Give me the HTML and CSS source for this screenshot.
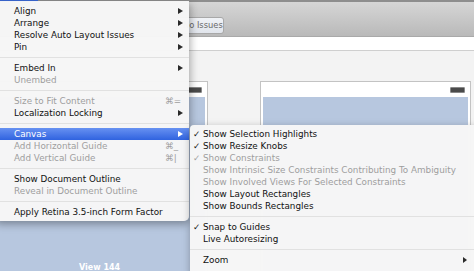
FILE: index.html
```html
<!DOCTYPE html>
<html lang="en">
<head>
    <meta charset="UTF-8">
    <meta name="viewport" content="width=device-width, initial-scale=1.0">
    <title>Editor menu</title>
    <link rel="stylesheet" href="styles.css">
</head>
<body>
    <div class="window">
        <div class="menubar">
            <span class="menubar-title"></span>
        </div>
        <div class="toolbar">
            <button class="issues">No Issues</button>
        </div>
        <div class="jumpbar"></div>
        <div class="canvas">
            <div class="scene scene-left">
                <div class="scene-header"><span class="battery"></span></div>
                <div class="scene-body"><span class="scene-label">View 144</span></div>
            </div>
            <div class="scene scene-right">
                <div class="scene-header"><span class="battery"></span></div>
                <div class="scene-body"></div>
            </div>
        </div>
    </div>

    <ul class="menu main-menu">
        <li class="item">Align<span class="arrow"></span></li>
        <li class="item">Arrange<span class="arrow"></span></li>
        <li class="item">Resolve Auto Layout Issues<span class="arrow"></span></li>
        <li class="item">Pin<span class="arrow"></span></li>
        <li class="separator"></li>
        <li class="item">Embed In<span class="arrow"></span></li>
        <li class="item disabled">Unembed</li>
        <li class="separator"></li>
        <li class="item disabled">Size to Fit Content<span class="shortcut">⌘=</span></li>
        <li class="item">Localization Locking<span class="arrow"></span></li>
        <li class="separator"></li>
        <li class="item selected">Canvas<span class="arrow"></span></li>
        <li class="item disabled">Add Horizontal Guide<span class="shortcut">⌘_</span></li>
        <li class="item disabled">Add Vertical Guide<span class="shortcut">⌘|</span></li>
        <li class="separator"></li>
        <li class="item">Show Document Outline</li>
        <li class="item disabled">Reveal in Document Outline</li>
        <li class="separator"></li>
        <li class="item">Apply Retina 3.5-inch Form Factor</li>
    </ul>

    <ul class="menu sub-menu">
        <li class="item"><span class="check">✓</span>Show Selection Highlights</li>
        <li class="item"><span class="check">✓</span>Show Resize Knobs</li>
        <li class="item disabled"><span class="check">✓</span>Show Constraints</li>
        <li class="item disabled"><span class="check"></span>Show Intrinsic Size Constraints Contributing To Ambiguity</li>
        <li class="item disabled"><span class="check"></span>Show Involved Views For Selected Constraints</li>
        <li class="item"><span class="check"></span>Show Layout Rectangles</li>
        <li class="item"><span class="check"></span>Show Bounds Rectangles</li>
        <li class="separator"></li>
        <li class="item"><span class="check">✓</span>Snap to Guides</li>
        <li class="item"><span class="check"></span>Live Autoresizing</li>
        <li class="separator"></li>
        <li class="item"><span class="check"></span>Zoom<span class="arrow"></span></li>
    </ul>
</body>
</html>
```

FILE: styles.css
```css
body {
    margin: 0;
    width: 474px;
    height: 271px;
    overflow: hidden;
    position: relative;
    font-family: "DejaVu Sans", sans-serif;
    font-size: 8.8px;
    background-color: #f3f3f3;
}
.window {
    display: flex;
    flex-direction: column;
    height: 271px;
}
.menubar {
    height: 2px;
    background-color: #8e8e8e;
}
.menubar-title {
    display: block;
    width: 38px;
    height: 2px;
    background-color: #3b6ad8;
}
.toolbar {
    height: 35px;
    background: linear-gradient(#d6d6d6, #b9b9b9);
    border-bottom: 1px solid #a9a9a9;
    padding-left: 176px;
    box-sizing: border-box;
    display: flex;
    align-items: center;
    padding-top: 12px;
}
.issues {
    font-family: "DejaVu Sans", sans-serif;
    font-size: 8.3px;
    color: #6a6a6a;
    background: linear-gradient(#f0f2f6, #e1e5ec);
    border: 1px solid #a8a8a8;
    border-radius: 3px;
    height: 17px;
    width: 48px;
    padding: 0 0 0 6px;
    text-align: left;
}
.jumpbar {
    height: 13px;
    background-color: #ffffff;
    border-bottom: 1px solid #cfcfcf;
}
.canvas {
    flex: 1;
    position: relative;
    background-color: #f3f3f3;
}
.scene {
    position: absolute;
    top: 30px;
    height: 220px;
    background-color: #ffffff;
    border: 1px solid #c3c3c3;
    padding: 0 2px;
    display: flex;
    flex-direction: column;
}
.scene-left {
    left: -10px;
    width: 212px;
}
.scene-right {
    left: 260px;
    width: 205px;
}
.scene-header {
    height: 15px;
    display: flex;
    align-items: center;
    justify-content: flex-end;
    padding-right: 3px;
}
.battery {
    width: 13px;
    height: 4px;
    background-color: #4a4a4a;
    border: 1px solid #888;
    border-radius: 1px;
}
.scene-body {
    flex: 1;
    background-color: #b7c7df;
    position: relative;
}
.scene-label {
    position: absolute;
    left: 86px;
    top: 166px;
    color: #ffffff;
    font-weight: bold;
    font-size: 8px;
}

.menu {
    position: absolute;
    list-style: none;
    margin: 0;
    background-color: rgba(246, 246, 246, 0.98);
    box-shadow: 1px 3px 8px rgba(0, 0, 0, 0.35);
    color: #111111;
}
.main-menu {
    left: -6px;
    top: 1px;
    width: 195px;
    padding: 4px 0 3px 0;
    border-radius: 0 0 5px 5px;
}
.sub-menu {
    left: 190px;
    top: 125px;
    width: 290px;
    padding: 3px 0 10px 0;
    border-radius: 4px;
}
.item {
    height: 12px;
    line-height: 12px;
    display: flex;
    align-items: center;
    white-space: nowrap;
    position: relative;
}
.main-menu .item {
    padding-left: 20px;
}
.sub-menu .item {
    padding-left: 3px;
}
.disabled {
    color: #9e9e9e;
}
.selected {
    background: linear-gradient(#6791f1, #3063df);
    color: #ffffff;
}
.separator {
    height: 1px;
    margin: 4px 0;
    background-color: #e1e1e1;
}
.arrow {
    position: absolute;
    width: 0;
    height: 0;
    border-left: 5px solid #2a2a2a;
    border-top: 3px solid transparent;
    border-bottom: 3px solid transparent;
    top: 3px;
}
.main-menu .arrow {
    left: 184px;
}
.sub-menu .arrow {
    left: 273px;
    border-left-width: 4px;
}
.selected .arrow {
    border-left-color: #ffffff;
}
.shortcut {
    position: absolute;
    left: 171px;
}
.check {
    display: inline-block;
    width: 10px;
    flex-shrink: 0;
}
```
